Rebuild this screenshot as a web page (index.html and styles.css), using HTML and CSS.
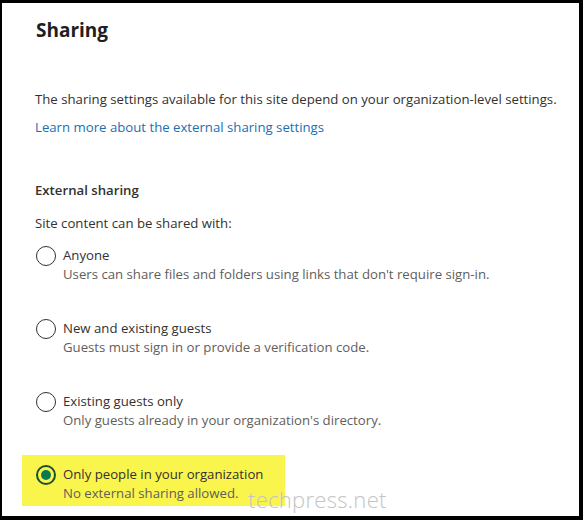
FILE: index.html
```html
<!DOCTYPE html>
<html lang="en">
<head>
<meta charset="utf-8">
<title>Sharing</title>
<link rel="stylesheet" href="styles.css">
</head>
<body>
<main class="panel">
  <h1 class="title">Sharing</h1>
  <p class="intro">The sharing settings available for this site depend on your organization-level settings.</p>
  <a class="link" href="#">Learn more about the external sharing settings</a>

  <h2 class="section">External sharing</h2>
  <p class="prompt">Site content can be shared with:</p>

  <div class="options">
    <label class="option">
      <span class="radio"></span>
      <span class="text">
        <span class="label">Anyone</span>
        <span class="desc">Users can share files and folders using links that don't require sign-in.</span>
      </span>
    </label>
    <label class="option">
      <span class="radio"></span>
      <span class="text">
        <span class="label">New and existing guests</span>
        <span class="desc">Guests must sign in or provide a verification code.</span>
      </span>
    </label>
    <label class="option">
      <span class="radio"></span>
      <span class="text">
        <span class="label">Existing guests only</span>
        <span class="desc">Only guests already in your organization's directory.</span>
      </span>
    </label>
    <label class="option option-marked">
      <span class="radio radio-on"></span>
      <span class="text">
        <span class="label">Only people in your organization</span>
        <span class="desc">No external sharing allowed.</span>
      </span>
    </label>
  </div>

  <div class="watermark">techpress.net</div>
</main>
</body>
</html>
```

FILE: styles.css
```css
* {
  box-sizing: border-box;
}

html, body {
  margin: 0;
  padding: 0;
  background: #fff;
}

body {
  width: 583px;
  height: 520px;
  font-family: "Open Sans", "Noto Sans", sans-serif;
  color: #323130;
}

.panel {
  position: relative;
  height: 520px;
  border-style: solid;
  border-color: #000;
  border-width: 3px 4px 4px 2px;
  padding: 13px 0 0 33px;
  display: flex;
  flex-direction: column;
  align-items: flex-start;
  overflow: hidden;
}

.title {
  margin: 0 0 0 1px;
  font-size: 19px;
  line-height: 28px;
  font-weight: 700;
  color: #201f1e;
}

.intro,
.prompt {
  margin: 0;
  font-size: 13.2px;
  line-height: 19px;
}

.intro {
  margin-top: 46px;
}

.link {
  margin-top: 9px;
  font-size: 13.2px;
  line-height: 19px;
  color: #1a6fb5;
  text-decoration: none;
}

.section {
  margin: 44px 0 0;
  font-size: 13.2px;
  line-height: 19px;
  font-weight: 600;
  color: #323130;
}

.prompt {
  margin-top: 14px;
}

.options {
  margin-top: 13px;
  display: flex;
  flex-direction: column;
  align-items: flex-start;
  gap: 35px;
}

.option {
  display: flex;
  align-items: flex-start;
  gap: 7px;
  font-size: 13.2px;
  line-height: 19px;
}

.radio {
  flex: none;
  width: 20px;
  height: 20px;
  margin-left: 1px;
  border: 1px solid #323130;
  border-radius: 50%;
  display: flex;
  align-items: center;
  justify-content: center;
}

.radio-on {
  border: 2px solid #184f35;
}

.radio-on::after {
  content: "";
  width: 10px;
  height: 10px;
  border-radius: 50%;
  background: #0b7a50;
}

.text {
  display: flex;
  flex-direction: column;
}

.label {
  color: #323130;
}

.desc {
  color: #605e5c;
}

.option-marked {
  margin: -10px 0 0 -13px;
  padding: 10px 22px 3px 13px;
  background: #faf54c;
}

.watermark {
  position: absolute;
  left: 246px;
  top: 481px;
  font-size: 22px;
  line-height: 30px;
  font-weight: 300;
  letter-spacing: 0.3px;
  color: #c4c4c4;
}
```
